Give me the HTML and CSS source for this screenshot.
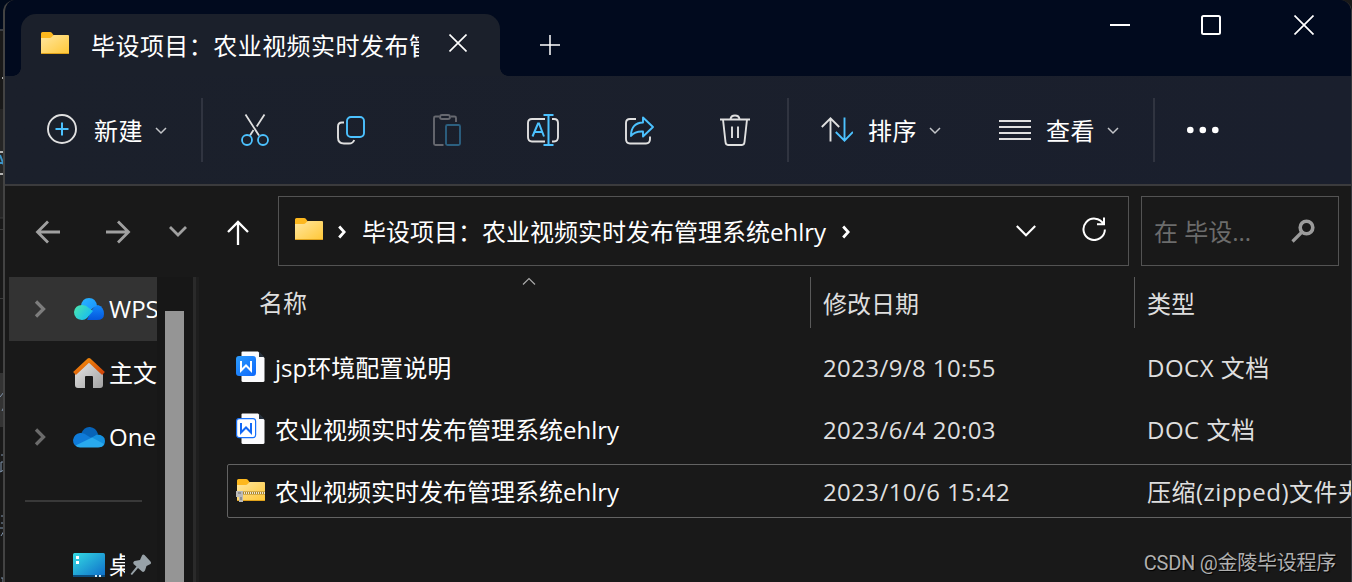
FILE: index.html
```html
<!DOCTYPE html>
<html lang="zh-CN">
<head>
    <meta charset="UTF-8">
    <meta name="viewport" content="width=device-width, initial-scale=1.0">
    <title>毕设项目：农业视频实时发布管理系统ehlry</title>
    <link rel="stylesheet" href="styles.css">
</head>
<body>

    <!-- shared icons -->
    <svg class="defs" width="0" height="0">
        <defs>
            <linearGradient id="folderFill" x1="0" y1="0" x2="1" y2="1">
                <stop offset="0" stop-color="#ffe7a0"/>
                <stop offset="1" stop-color="#ffc736"/>
            </linearGradient>
            <linearGradient id="wpsGreen" x1="0" y1="0.2" x2="1" y2="0.8">
                <stop offset="0" stop-color="#49e5b0"/>
                <stop offset="1" stop-color="#10b7fa"/>
            </linearGradient>
            <linearGradient id="wpsBlue" x1="0" y1="0" x2="0" y2="1">
                <stop offset="0" stop-color="#1389fb"/>
                <stop offset="1" stop-color="#0456dc"/>
            </linearGradient>
            <linearGradient id="wpsTop" x1="0" y1="0" x2="1" y2="1">
                <stop offset="0" stop-color="#29b7ff"/>
                <stop offset="1" stop-color="#178cff"/>
            </linearGradient>
            <linearGradient id="roof" x1="0" y1="0" x2="1" y2="1">
                <stop offset="0" stop-color="#f7930c"/>
                <stop offset="1" stop-color="#cf4309"/>
            </linearGradient>
            <linearGradient id="wall" x1="0" y1="0" x2="1" y2="1">
                <stop offset="0" stop-color="#e8e8e8"/>
                <stop offset="1" stop-color="#a2a2a2"/>
            </linearGradient>
            <linearGradient id="desk" x1="0" y1="0" x2="1" y2="1">
                <stop offset="0" stop-color="#34dbe3"/>
                <stop offset="1" stop-color="#0e6bc9"/>
            </linearGradient>
            <linearGradient id="docFill" x1="0" y1="0" x2="1" y2="1">
                <stop offset="0" stop-color="#2d9dfd"/>
                <stop offset="1" stop-color="#0d66fb"/>
            </linearGradient>
            <symbol id="folder" viewBox="0 0 28 22">
                <path d="M0 1.5Q0 0 1.5 0H9q1.200 0 1.800 0.800L12.500 3V8H0z" fill="#fdb81e"/>
                <path d="M0 6H8.500q1.500 0 2.500-1.200L12.500 3H27q1 0 1 1V21q0 1-1 1H1q-1 0-1-1z" fill="url(#folderFill)"/>
                <path d="M0.300 21.500H27.700" stroke="#e0a21b"/>
            </symbol>
            <symbol id="chevron" viewBox="0 0 14 14">
                <path d="M2 5l5 5 5-5" fill="none" stroke="#c3c5c9" stroke-width="1.500"/>
            </symbol>
        </defs>
    </svg>

    <!-- edge of the window underneath -->
    <svg class="behind" width="16" height="582">
        <rect width="16" height="582" fill="#191919"/>
        <rect width="16" height="30" fill="#010a1b"/>
        <path d="M0 30h5" stroke="#3a3d43" stroke-width="2"/>
        <rect y="109" width="5" height="109" fill="#252525"/>
        <path d="M2 78h3M0 152h5M0 174h5" stroke="#b4b4b4" stroke-width="2"/>
        <path d="M0 155l5 13M0 163h4" fill="none" stroke="#3b93c6" stroke-width="2"/>
        <path d="M0 218h5M0 229.500h5M0 298.500h5" stroke="#3c3c3c"/>
        <rect y="373" width="5" height="54" fill="#333"/>
        <path d="M0 397l4-5M2 411l3-6M1 455h3v7h-3M0 472l4-2M1 462v10M1 516h3v7h-3M0 528h3M1 536l3-5M1 578h2v4" fill="none" stroke="#7f93ab"/>
    </svg>

    <div class="window">
        <div class="titlebar">
            <div class="tab">
                <svg width="28" height="22"><use href="#folder"/></svg>
                <span class="tab-title">毕设项目：农业视频实时发布管理系统ehlry</span>
                <svg class="tab-close" width="18" height="18"><path d="M0.500 0.500l17 17M17.500 0.500l-17 17" stroke="#fff" stroke-width="1.600"/></svg>
            </div>
            <svg class="new-tab" width="20" height="20"><path d="M10 0v20M0 10h20" stroke="#fff" stroke-width="1.500"/></svg>
            <div class="window-buttons">
                <svg width="20" height="20"><path d="M0 10h20" stroke="#fff" stroke-width="2"/></svg>
                <svg width="20" height="20"><rect x="1" y="1" width="18" height="18" rx="1.500" fill="none" stroke="#fff" stroke-width="2"/></svg>
                <svg width="20" height="20"><path d="M0.500 0.500l19 19M19.500 0.500l-19 19" stroke="#fff" stroke-width="1.700"/></svg>
            </div>
        </div>

        <div class="toolbar">
            <div class="command new">
                <svg width="32" height="32" fill="none" stroke-width="1.900">
                    <circle cx="16" cy="15" r="14" stroke="#e0e0e0"/>
                    <path d="M16 8.500v13M9.500 15h13" stroke="#4cc2ff" stroke-width="2"/>
                </svg>
                <span>新建</span>
                <svg class="chev" width="14" height="14"><use href="#chevron"/></svg>
            </div>
            <div class="separator"></div>
            <div class="icons">
                <svg width="32" height="34" fill="none" stroke-width="1.800">
                    <path d="M6.500 1.500L20 22.500M25.500 1.500L17.700 13.500M14.500 17l-3.500 5.500" stroke="#e0e0e0"/>
                    <circle cx="8" cy="27" r="5" stroke="#4cc2ff"/>
                    <circle cx="24" cy="27" r="5" stroke="#4cc2ff"/>
                </svg>
                <svg width="32" height="34" fill="none" stroke-width="1.900">
                    <path d="M9 9.500H7Q3 9.500 3 13.500V24.500Q3 30.500 9 30.500H14Q18 30.500 19.200 27" stroke="#e0e0e0"/>
                    <rect x="12" y="4" width="17" height="20" rx="4" stroke="#4cc2ff"/>
                </svg>
                <svg width="32" height="34" fill="none" stroke-width="1.900">
                    <path d="M8 3.500H4.500Q3 3.500 3 5V30.500Q3 32 4.500 32H12.500M20 3.500H23.500Q25 3.500 25 5V9" stroke="#66686f"/>
                    <rect x="9" y="2" width="10" height="4" rx="2" stroke="#66686f"/>
                    <rect x="15" y="12" width="14" height="20" rx="1.500" stroke="#2c6080"/>
                </svg>
                <svg width="32" height="34" fill="none" stroke-width="1.900">
                    <path d="M18 6H5Q1 6 1 10V24Q1 28.500 5 28.500H18M25 6H27Q31 6 31 10V24Q31 28.500 27 28.500H25" stroke="#e0e0e0"/>
                    <path d="M21.500 2V32M16.500 2H26.500M16.500 32H26.500M5.500 23.500L11 10.500H12L17 23.500M7.500 19H15.500" stroke="#4cc2ff" stroke-width="2"/>
                </svg>
                <svg width="32" height="34" fill="none" stroke-width="1.900">
                    <path d="M13 6H7Q3 6 3 10V26Q3 30.500 7 30.500H23Q27 30.500 27 26V23.500" stroke="#e0e0e0"/>
                    <path d="M20 4.500L30 14 20 23.500V18.500Q12 18 8 23 8 10 20 9.500z" stroke="#4cc2ff" stroke-linejoin="round"/>
                </svg>
                <svg width="32" height="34" fill="none" stroke="#e0e0e0" stroke-width="1.900">
                    <path d="M1 6.500H31M4 6.500L6.500 29Q6.800 32 9 32H23Q25.200 32 25.500 29L28 6.500M11.500 6Q12 2.500 16 2.500T20.500 6M13 13.500V25M19 13.500V25"/>
                </svg>
            </div>
            <div class="separator"></div>
            <div class="command sort">
                <svg width="32" height="34" fill="none" stroke-width="1.900">
                    <path d="M9.500 28.500V5M0.800 14L9.500 5.300 18.200 14" stroke="#e0e0e0"/>
                    <path d="M23.500 4.500V28M14.800 19L23.500 27.700 32 19" stroke="#4cc2ff"/>
                </svg>
                <span>排序</span>
                <svg class="chev" width="14" height="14"><use href="#chevron"/></svg>
            </div>
            <div class="command view">
                <svg width="32" height="20"><path d="M0 1h32M0 7h32M0 13h32M0 19h32" stroke="#e0e0e0" stroke-width="2"/></svg>
                <span>查看</span>
                <svg class="chev" width="14" height="14"><use href="#chevron"/></svg>
            </div>
            <div class="separator"></div>
            <svg class="more" width="32" height="8" fill="#fff"><circle cx="3.300" cy="4" r="3.300"/><circle cx="15.800" cy="4" r="3.300"/><circle cx="28.300" cy="4" r="3.300"/></svg>
        </div>

        <div class="navbar">
            <div class="nav-buttons">
                <svg width="26" height="24" fill="none" stroke="#a0a0a0" stroke-width="2.800"><path d="M13 1.500L2.500 12 13 22.500M2.500 12H25"/></svg>
                <svg width="26" height="24" fill="none" stroke="#a0a0a0" stroke-width="2.800"><path d="M13 1.500L23.500 12 13 22.500M23.500 12H1"/></svg>
                <svg width="18" height="24" fill="none" stroke="#a0a0a0" stroke-width="2.800"><path d="M1 7L9 15 17 7"/></svg>
                <svg width="22" height="26" fill="none" stroke="#fff" stroke-width="2.300"><path d="M1 13L11 3 21 13M11 3V26"/></svg>
            </div>
            <div class="address">
                <svg width="28" height="22"><use href="#folder"/></svg>
                <svg class="crumb" width="8" height="14"><path d="M1.200 1.500L6.200 7 1.200 12.500" fill="none" stroke="#fff" stroke-width="2.800"/></svg>
                <span>毕设项目：农业视频实时发布管理系统ehlry</span>
                <svg class="crumb last" width="8" height="14"><path d="M1.200 1.500L6.200 7 1.200 12.500" fill="none" stroke="#fff" stroke-width="2.800"/></svg>
                <svg class="dropdown" width="20" height="12"><path d="M0.800 1L10 10.200 19.200 1" fill="none" stroke="#fff" stroke-width="2.100"/></svg>
                <svg class="refresh" width="24" height="24" fill="none" stroke="#fff" stroke-width="2"><path d="M21.500 7A10.700 10.700 0 1 0 22.900 12.500M22 0.500V7.300H15"/></svg>
            </div>
            <div class="search">
                <span>在 毕设...</span>
                <svg width="24" height="24" fill="none" stroke="#9b9b9b"><circle cx="15.500" cy="8.500" r="6.300" stroke-width="3.600"/><path d="M11 13L1.500 22.500" stroke-width="3.200"/></svg>
            </div>
        </div>

        <div class="content">
            <div class="sidebar">
                <div class="side-item selected">
                    <svg class="expand" width="12" height="18"><path d="M2 1.500L9.500 9 2 16.500" fill="none" stroke="#7d7d7d" stroke-width="3.300"/></svg>
                    <svg width="32" height="32">
                        <path d="M14 27Q20 12 25 12Q31 14 31 21Q31 27 24 27z" fill="url(#wpsBlue)"/>
                        <path d="M8 13Q9 5 16 5Q23 5 24 13Q20 14 15 20z" fill="url(#wpsTop)"/>
                        <path d="M9 27Q1 26 1 19Q2 12 9 12Q13 12 16 15L20 18L14 25Q12 27 9 27z" fill="url(#wpsGreen)"/>
                    </svg>
                    <span>WPS</span>
                </div>
                <div class="side-item">
                    <svg class="expand" width="12" height="18"></svg>
                    <svg width="32" height="32">
                        <path d="M2 15L16 3 30 15V28Q30 31 27 31H20V20Q20 19 19 19H13Q12 19 12 20V31H5Q2 31 2 28z" fill="url(#wall)"/>
                        <path d="M1.500 16.500L16 3 30.500 16.500" fill="none" stroke="url(#roof)" stroke-width="4" stroke-linejoin="round"/>
                    </svg>
                    <span>主文</span>
                </div>
                <div class="side-item">
                    <svg class="expand" width="12" height="18"><path d="M2 1.500L9.500 9 2 16.500" fill="none" stroke="#6b6b6b" stroke-width="3.300"/></svg>
                    <svg width="32" height="32">
                        <path d="M8 13Q11 5.500 17 6Q23 6.500 25 13L19 21z" fill="#0763b8"/>
                        <path d="M6 26Q0 25 0 19Q1 13 7 12Q11 11.500 15 15L22 19 6 26z" fill="#0f7bd9"/>
                        <path d="M18 17L24 13.500Q32 14 32 20Q32 25 28 26z" fill="#1490df"/>
                        <path d="M2.500 24.500L19 16.500 31 23Q29 26.500 25 26.500H7Q4 26.500 2.500 24.500z" fill="#29a9ed"/>
                    </svg>
                    <span>One</span>
                </div>
                <div class="divider"></div>
                <div class="side-item pinned">
                    <svg width="32" height="24">
                        <rect width="32" height="24" rx="1.500" fill="url(#desk)"/>
                        <path d="M3 3h3v3h-3zM3 8h3v3h-3z" fill="#fff"/>
                        <path d="M0 23h32" stroke="#0c4d7e" stroke-width="2"/>
                        <path d="M22 23h2M26 23h2" stroke="#d9ecfa" stroke-width="2"/>
                    </svg>
                    <span>桌</span>
                    <svg class="pin" width="22" height="22"><path d="M12 1.500Q13 0 14.500 1L20.500 7.500Q22 9.500 19.500 10.500L16.500 12 15 16.500Q13.500 19 11.500 17L8 14 2 21 0.500 20 6.500 12.500 3.500 10Q2.500 8 4.500 7L10 6z" fill="#98a2a8"/></svg>
                </div>
            </div>
            <div class="scrollbar"><div class="thumb"></div></div>
            <div class="splitter"></div>

            <div class="files">
                <div class="row columns">
                    <div class="name">名称
                        <svg class="sort-arrow" width="14" height="8"><path d="M1 7.500L7 1.500 13 7.500" fill="none" stroke="#aaa" stroke-width="1.200"/></svg>
                    </div>
                    <div class="date">修改日期</div>
                    <div class="type">类型</div>
                </div>
                <div class="row">
                    <div class="name">
                        <svg width="30" height="32">
                            <path d="M5.500 1.500Q5.500 0.500 6.500 0.500H22L28.500 7V29.500Q28.500 31 27 31H7Q5.500 31 5.500 29.500z" fill="#fbfbfd"/>
                            <path d="M23 0.500V6H28.500z" fill="#26303c"/>
                            <rect x="0" y="5" width="20" height="20" rx="3" fill="url(#docFill)"/>
                            <path d="M5 10V19.500L10 14.500 15 19.500V10" fill="none" stroke="#fff" stroke-width="2"/>
                        </svg>
                        <span>jsp环境配置说明</span>
                    </div>
                    <div class="date">2023/9/8 10:55</div>
                    <div class="type">DOCX 文档</div>
                </div>
                <div class="row">
                    <div class="name">
                        <svg width="30" height="32">
                            <path d="M5.500 1.500Q5.500 0.500 6.500 0.500H22L28.500 7V29.500Q28.500 31 27 31H7Q5.500 31 5.500 29.500z" fill="#fbfbfd"/>
                            <path d="M23 0.500V6H28.500z" fill="#26303c"/>
                            <rect x="0.600" y="5.600" width="19" height="19" rx="2.500" fill="#fff" stroke="#1670fb" stroke-width="1.200"/>
                            <path d="M5 10V19.500L10 14.500 15 19.500V10" fill="none" stroke="#1268f5" stroke-width="2"/>
                        </svg>
                        <span>农业视频实时发布管理系统ehlry</span>
                    </div>
                    <div class="date">2023/6/4 20:03</div>
                    <div class="type">DOC 文档</div>
                </div>
                <div class="row focused">
                    <div class="name">
                        <svg width="30" height="24">
                            <svg x="1" y="0" width="28" height="22"><use href="#folder"/></svg>
                            <path d="M5 14H29" stroke="#a8842f" stroke-width="3"/>
                            <path d="M6 14H29" stroke="#ece6d2" stroke-width="2" stroke-dasharray="1 1"/>
                            <path d="M0 12H7V23H3V18H0z" fill="#b8b8b8"/>
                            <path d="M2 14H5M5 18V21" stroke="#666"/>
                        </svg>
                        <span>农业视频实时发布管理系统ehlry</span>
                    </div>
                    <div class="date">2023/10/6 15:42</div>
                    <div class="type">压缩(zipped)文件夹</div>
                </div>
            </div>
        </div>
    </div>

    <div class="watermark">CSDN @金陵毕设程序</div>

</body>
</html>
```

FILE: styles.css
```css
* {
    box-sizing: border-box;
}
body {
    margin: 0;
    width: 1352px;
    height: 582px;
    display: flex;
    overflow: hidden;
    background: #191919;
    color: #fff;
    font-family: "Open Sans", "Noto Sans CJK SC", sans-serif;
    font-size: 24px;
    line-height: 32px;
    white-space: nowrap;
}
svg {
    display: block;
    flex: none;
}
.defs {
    position: absolute;
}
.behind {
    margin-right: -13px;
}
.window {
    position: relative;
    width: 1349px;
    height: 600px;
    flex: none;
    border-left: 2px solid #434343;
    border-right: 1px solid #36373c;
    border-top-left-radius: 12px;
    border-top-right-radius: 12px;
    background: #191919;
    overflow: hidden;
}

/* title bar */
.titlebar {
    display: flex;
    height: 76px;
    padding-left: 16px;
    background: #010a1e;
}
.tab {
    position: relative;
    display: flex;
    align-items: center;
    width: 479px;
    height: 62px;
    margin-top: 14px;
    padding: 0 33px 4px 20px;
    border-radius: 15px 15px 0 0;
    background: #1b202b;
}
.tab::before, .tab::after {
    content: "";
    position: absolute;
    bottom: 0;
    width: 8px;
    height: 8px;
}
.tab::before {
    left: -8px;
    background: radial-gradient(circle at 0 0, transparent 7.5px, #1b202b 8px);
}
.tab::after {
    right: -8px;
    background: radial-gradient(circle at 100% 0, transparent 7.5px, #1b202b 8px);
}
.tab-title {
    width: 328px;
    margin: 6px 0 0 22px;
    letter-spacing: 0.45px;
    overflow: hidden;
}
.tab-close {
    margin-left: auto;
}
.new-tab {
    margin: 35px 0 0 40px;
}
.window-buttons {
    display: flex;
    gap: 72px;
    margin: 15px 37px 0 auto;
}
.window-buttons svg:nth-child(2) {
    margin: 0 1px 0 -1px;
}

/* command bar */
.toolbar {
    display: flex;
    align-items: center;
    height: 110px;
    border-bottom: 2px solid #3b3b3d;
    background: linear-gradient(to right, #1b202b, #1a1f2d);
}
.command {
    display: flex;
    align-items: center;
}
.command span {
    margin: 2px 11px 0 16px;
    letter-spacing: 0.5px;
}
.new {
    margin: 0 33px 0 41px;
}
.sort {
    margin-left: 32px;
}
.sort span, .view span {
    margin-left: 15px;
}
.view {
    margin: 0 33px 0 57px;
}
.separator {
    width: 2px;
    height: 64px;
    background: #303440;
}
.icons {
    display: flex;
    gap: 64px;
    margin: 0 36px;
}
.more {
    margin-left: 32px;
}

/* navigation */
.navbar {
    display: flex;
    height: 91px;
    padding-top: 10px;
}
.nav-buttons {
    display: flex;
    align-items: center;
    width: 273px;
    height: 72px;
    padding-left: 30px;
}
.nav-buttons svg:nth-child(2) {
    margin-left: 44px;
}
.nav-buttons svg:nth-child(3) {
    margin-left: 38px;
}
.nav-buttons svg:nth-child(4) {
    margin-left: 40px;
}
.address, .search {
    display: flex;
    align-items: center;
    height: 70px;
    border: 1px solid #535353;
}
.address {
    width: 851px;
    padding: 0 22px 0 16px;
}
.address > svg:first-child {
    margin-bottom: 4px;
}
.address span, .search span {
    margin-top: 1px;
}
.crumb {
    margin: 2px 16px 0 15px;
}
.last {
    margin: 2px 0 0 16px;
}
.dropdown {
    margin-left: auto;
}
.refresh {
    margin: 0 0 4px 46px;
}
.search {
    justify-content: space-between;
    width: 198px;
    margin-left: 12px;
    padding: 0 23px 0 12px;
    color: #6c6c6c;
}

/* left pane */
.content {
    display: flex;
    height: 310px;
}
.sidebar {
    flex: none;
    width: 148px;
    margin-left: 4px;
    overflow: hidden;
}
.side-item {
    display: flex;
    align-items: center;
    height: 64px;
    padding-left: 25px;
}
.side-item span {
    margin-left: 4px;
}
.selected {
    background: #333;
}
.expand {
    margin-right: 27px;
}
.divider {
    width: 117px;
    height: 2px;
    margin: 31px 0 31px 16px;
    background: #393939;
}
.pinned {
    padding-left: 64px;
}
.pinned span {
    width: 16px;
    overflow: hidden;
}
.pin {
    margin-left: 5px;
}
.scrollbar {
    flex: none;
    width: 36px;
    padding: 34px 9px 0 8px;
    background: #171717;
}
.thumb {
    height: 280px;
    background: #959595;
}
.splitter {
    flex: none;
    width: 6px;
    border-left: 3px solid #2a2a2a;
    background: #1e1e1e;
}

/* file list */
.files {
    flex: none;
    padding-left: 28px;
}
.row {
    display: flex;
    align-items: center;
    width: 1140px;
    height: 54px;
    margin-bottom: 8px;
    border: 1px solid transparent;
    color: #dedede;
}
.focused {
    border-color: #636363;
    border-radius: 2px;
}
.name {
    display: flex;
    align-items: center;
    flex: none;
    width: 583px;
    padding-left: 8px;
    color: #fff;
}
.name span {
    margin: 1px 0 0 9px;
}
.date {
    flex: none;
    width: 324px;
    padding: 1px 0 0 12px;
    letter-spacing: 0.4px;
}
.type {
    padding: 1px 0 0 12px;
    letter-spacing: 0.5px;
}
.columns {
    height: 51px;
    margin-bottom: 12px;
    border: 0;
}
.columns > div {
    height: 51px;
    padding-top: 0;
    line-height: 54px;
    color: #dedede;
}
.columns .name {
    position: relative;
    padding-left: 32px;
}
.columns .date, .columns .type {
    border-left: 1px solid #5a5a5a;
    letter-spacing: 0;
}
.sort-arrow {
    position: absolute;
    left: 295px;
    top: 0;
}

.watermark {
    position: absolute;
    right: 16px;
    bottom: 3px;
    color: #b0b0b0;
    font-family: Roboto, "Noto Sans CJK SC", sans-serif;
    font-size: 20px;
    letter-spacing: -0.25px;
    text-shadow: 1px 1px 1px #000;
}
```
